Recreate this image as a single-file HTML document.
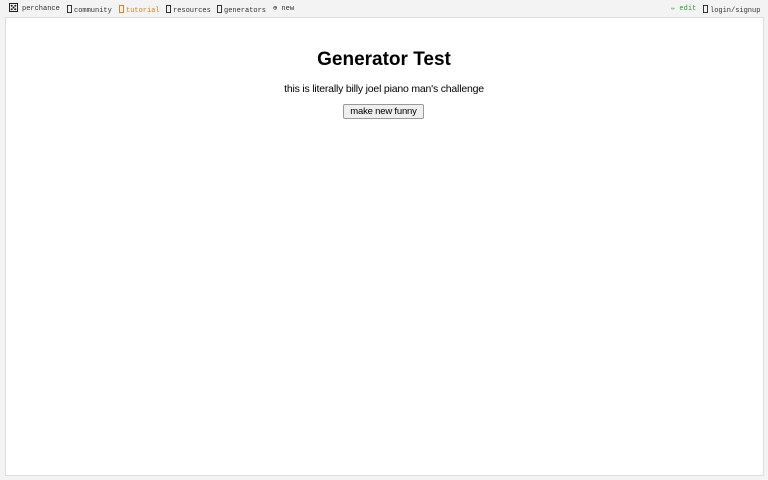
<!DOCTYPE html>
<html><head><meta charset="utf-8"><style>
html,body{margin:0;padding:0;width:768px;height:480px;background:#f3f3f3;overflow:hidden}
.bar{position:absolute;left:0;top:0;width:768px;height:17px;font-family:"Liberation Mono",monospace;font-size:7px;color:#333;}
.bar span{position:absolute;top:5px;white-space:nowrap;line-height:8px}
.box{display:inline-block;width:3px;height:6px;border:1px solid #333;vertical-align:-1px;margin-right:2px}
.main{position:absolute;left:5px;top:17px;width:757px;height:457px;background:#fff;border:1px solid #ddd}
h1{position:absolute;top:49px;left:0;width:768px;text-align:center;margin:0;font:bold 19px "Liberation Sans",sans-serif;color:#000}
p{position:absolute;top:83px;left:0;width:768px;text-align:center;margin:0;font:10.5px "Liberation Sans",sans-serif;letter-spacing:-0.2px;color:#000}
button{position:absolute;left:343px;top:104px;width:81px;height:15px;font:9.5px "Liberation Sans",sans-serif;letter-spacing:-0.2px;background:#efefef;border:1px solid #999;border-radius:2px;padding:0;color:#000}
</style></head><body>
<div class="bar">
<span style="left:9px;top:3px"><svg width="9" height="9" viewBox="0 0 9 9" style="vertical-align:-1px"><rect x="0.5" y="0.5" width="8" height="8" fill="none" stroke="#222"/><circle cx="2.7" cy="2.7" r="1" fill="#222"/><circle cx="6.3" cy="2.7" r="1" fill="#222"/><circle cx="4.5" cy="4.5" r="1" fill="#222"/><circle cx="2.7" cy="6.3" r="1" fill="#222"/><circle cx="6.3" cy="6.3" r="1" fill="#222"/></svg></span>
<span style="left:22px">perchance</span>
<span style="left:67px"><i class="box"></i>community</span>
<span style="left:119px;color:#e08020"><i class="box" style="border-color:#e08020"></i>tutorial</span>
<span style="left:166px"><i class="box"></i>resources</span>
<span style="left:217px"><i class="box"></i>generators</span>
<span style="left:273px">⊕ new</span>
<span style="left:671px;color:#3a9a3a">✏ edit</span>
<span style="left:703px"><i class="box"></i>login/signup</span>
</div>
<div class="main"></div>
<h1>Generator Test</h1>
<p>this is literally billy joel piano man's challenge</p>
<button>make new funny</button>
</body></html>
